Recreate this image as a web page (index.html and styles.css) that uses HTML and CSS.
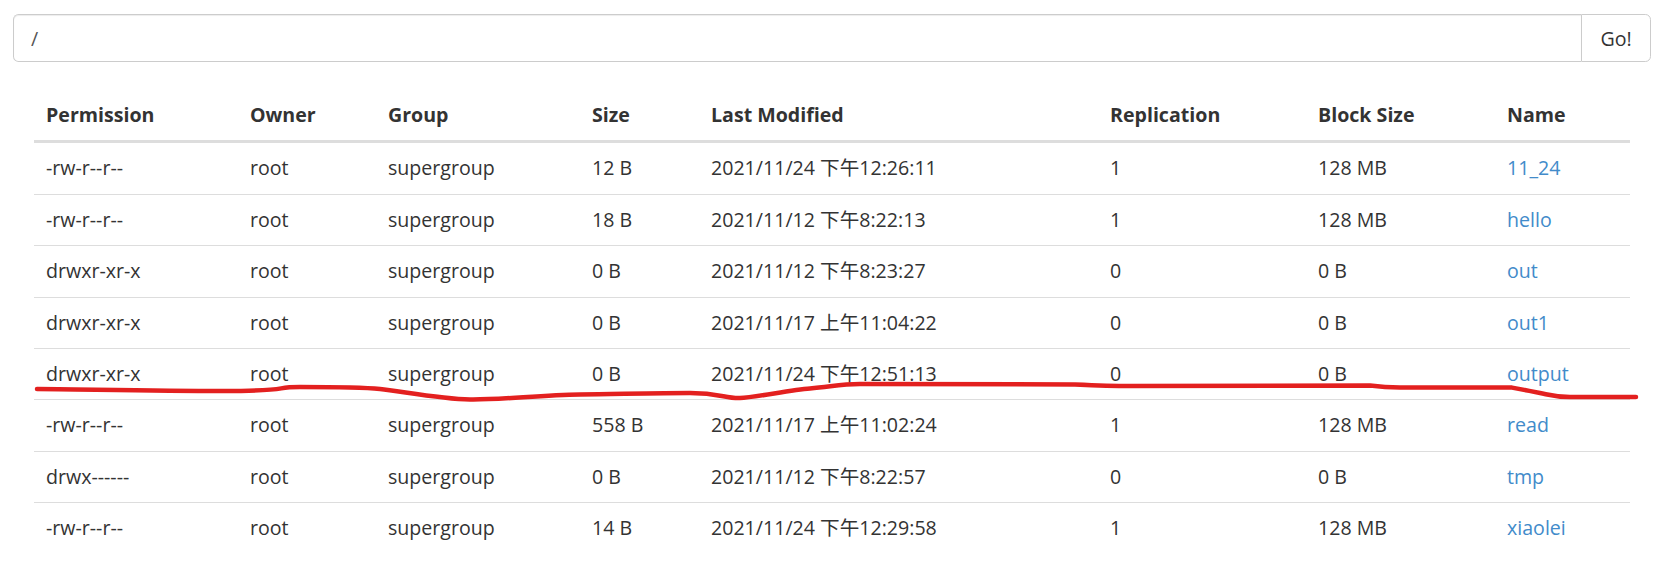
FILE: index.html
```html
<!DOCTYPE html>
<html>
<head>
<meta charset="utf-8">
<link rel="stylesheet" href="styles.css">
</head>
<body>
<div class="page">
  <div class="input-group">
    <input class="path-input" type="text" value="/">
    <button class="go-btn">Go!</button>
  </div>
  <div class="table-wrap">
    <table class="listing">
      <colgroup>
        <col class="c-perm"><col class="c-owner"><col class="c-group"><col class="c-size"><col class="c-mod"><col class="c-rep"><col class="c-block"><col class="c-name">
      </colgroup>
      <thead>
        <tr><th>Permission</th><th>Owner</th><th>Group</th><th>Size</th><th>Last Modified</th><th>Replication</th><th>Block Size</th><th>Name</th></tr>
      </thead>
      <tbody>
        <tr><td>-rw-r--r--</td><td>root</td><td>supergroup</td><td>12 B</td><td>2021/11/24 下午12:26:11</td><td>1</td><td>128 MB</td><td><a href="#">11_24</a></td></tr>
        <tr><td>-rw-r--r--</td><td>root</td><td>supergroup</td><td>18 B</td><td>2021/11/12 下午8:22:13</td><td>1</td><td>128 MB</td><td><a href="#">hello</a></td></tr>
        <tr><td>drwxr-xr-x</td><td>root</td><td>supergroup</td><td>0 B</td><td>2021/11/12 下午8:23:27</td><td>0</td><td>0 B</td><td><a href="#">out</a></td></tr>
        <tr><td>drwxr-xr-x</td><td>root</td><td>supergroup</td><td>0 B</td><td>2021/11/17 上午11:04:22</td><td>0</td><td>0 B</td><td><a href="#">out1</a></td></tr>
        <tr><td>drwxr-xr-x</td><td>root</td><td>supergroup</td><td>0 B</td><td>2021/11/24 下午12:51:13</td><td>0</td><td>0 B</td><td><a href="#">output</a></td></tr>
        <tr><td>-rw-r--r--</td><td>root</td><td>supergroup</td><td>558 B</td><td>2021/11/17 上午11:02:24</td><td>1</td><td>128 MB</td><td><a href="#">read</a></td></tr>
        <tr><td>drwx------</td><td>root</td><td>supergroup</td><td>0 B</td><td>2021/11/12 下午8:22:57</td><td>0</td><td>0 B</td><td><a href="#">tmp</a></td></tr>
        <tr><td>-rw-r--r--</td><td>root</td><td>supergroup</td><td>14 B</td><td>2021/11/24 下午12:29:58</td><td>1</td><td>128 MB</td><td><a href="#">xiaolei</a></td></tr>
      </tbody>
    </table>
  </div>
</div>
<svg class="scribble" width="1672" height="573" viewBox="0 0 1672 573">
  <path d="M37,389 C70,389 150,391 223,391 S270,387 300,387 S360,387 380,389 S440,399 470,399.5 S540,395 580,394.5 S660,393 690,393 S725,398.5 740,398 S790,390 810,388.5 S840,384 860,384 L1075,384.5 S1110,386 1130,386 L1370,385.5 S1385,387.6 1400,387.6 L1512,387.6 S1530,391 1540,393 S1555,397 1570,397 L1636,397" fill="none" stroke="#e3201f" stroke-width="4.5" stroke-linecap="round" stroke-linejoin="round"/>
</svg>
</body>
</html>
```

FILE: styles.css
```css
html, body {
  margin: 0;
  padding: 0;
  background: #fff;
}
body {
  font-family: "Open Sans", "Noto Sans CJK SC", sans-serif;
  font-size: 19.6px;
  line-height: 28px;
  color: #333;
  position: relative;
  width: 1672px;
  height: 573px;
  overflow: hidden;
}
.page {
  padding: 14px 21px 0 13px;
}
.input-group {
  display: flex;
  height: 48px;
}
.path-input {
  flex: 1;
  box-sizing: border-box;
  height: 48px;
  margin: 0;
  border: 1px solid #ccc;
  border-right: none;
  border-radius: 5.6px 0 0 5.6px;
  padding: 0 17px;
  font-family: inherit;
  font-size: 19.6px;
  color: #555;
  outline: none;
  box-shadow: inset 0 1px 1px rgba(0,0,0,0.075);
}
.go-btn {
  box-sizing: border-box;
  width: 70px;
  height: 48px;
  margin: 0;
  border: 1px solid #ccc;
  border-radius: 0 5.6px 5.6px 0;
  background: #fff;
  font-family: inherit;
  font-size: 19.6px;
  color: #333;
  padding: 0;
}
.table-wrap {
  padding: 28px 0 0 21px;
}
.listing {
  border-collapse: collapse;
  table-layout: fixed;
  width: 1596px;
}
.c-perm { width: 204px; }
.c-owner { width: 138px; }
.c-group { width: 204px; }
.c-size { width: 119px; }
.c-mod { width: 399px; }
.c-rep { width: 208px; }
.c-block { width: 189px; }
.c-name { width: 135px; }
.listing th {
  text-align: left;
  font-weight: 700;
  padding: 11px 12px 11.4px;
  border-bottom: 3px solid #ddd;
  line-height: 28px;
}
.listing td {
  padding: 11px 12px 11.4px;
  border-top: 1px solid #ddd;
  line-height: 28px;
  white-space: nowrap;
}
.listing tbody tr:first-child td {
  border-top: none;
}
.listing a {
  color: #428bca;
  text-decoration: none;
}
.scribble {
  position: absolute;
  left: 0;
  top: 0;
  pointer-events: none;
}
```
